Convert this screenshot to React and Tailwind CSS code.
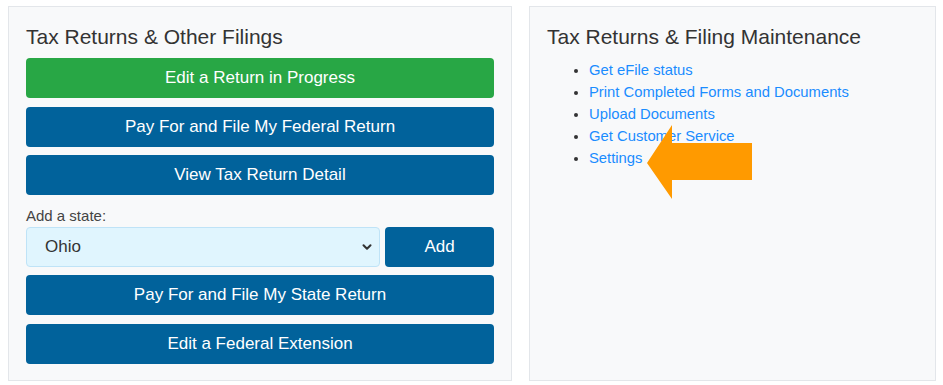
import { ChevronDown } from "lucide-react";

const font = { fontFamily: '"Liberation Sans", Arial, sans-serif' };

const links = [
  "Get eFile status",
  "Print Completed Forms and Documents",
  "Upload Documents",
  "Get Customer Service",
  "Settings",
];

function BlueButton({ children, className = "" }) {
  return (
    <button
      className={`h-[40px] w-full rounded-[4px] bg-[#01629b] text-[17px] text-white ${className}`}
    >
      {children}
    </button>
  );
}

export default function App() {
  return (
    <div
      className="flex gap-[17px] bg-white pl-[8px] pt-[6px] pb-[4px] text-[#333]"
      style={font}
    >
      {/* left card */}
      <div className="w-[504px] h-[375px] border border-[#e3e6ea] bg-[#f8f9fa] px-[17px] pt-[17px]">
        <h4 className="text-[21px] leading-[25px] text-[#333] mb-[9px]">
          Tax Returns &amp; Other Filings
        </h4>
        <div className="flex flex-col gap-[8.5px]">
          <button className="h-[40px] w-full rounded-[4px] bg-[#28a745] text-[17px] text-white">
            Edit a Return in Progress
          </button>
          <BlueButton>Pay For and File My Federal Return</BlueButton>
          <BlueButton>View Tax Return Detail</BlueButton>
        </div>
        <div className="mt-[9px] text-[15px] leading-[23px] text-[#444]">Add a state:</div>
        <div className="flex gap-[5px]">
          <div className="relative flex-1">
            <select
              defaultValue="Ohio"
              className="h-[40px] w-full appearance-none rounded-[4px] border border-[#bfe3f7] bg-[#e0f5fe] pl-[18px] text-[17px] text-[#333] outline-none"
              style={font}
            >
              <option>Ohio</option>
              <option>Indiana</option>
              <option>Michigan</option>
            </select>
            <ChevronDown
              size={14}
              strokeWidth={3.5}
              className="pointer-events-none absolute right-[6px] top-[13px] text-[#333]"
            />
          </div>
          <BlueButton className="!w-[109px]">Add</BlueButton>
        </div>
        <div className="mt-[8px] flex flex-col gap-[8.5px]">
          <BlueButton>Pay For and File My State Return</BlueButton>
          <BlueButton>Edit a Federal Extension</BlueButton>
        </div>
      </div>

      {/* right card */}
      <div className="relative w-[407px] h-[375px] border border-[#e3e6ea] bg-[#f8f9fa] px-[17px] pt-[17px]">
        <h4 className="text-[21px] leading-[25px] text-[#333] mb-[10px]">
          Tax Returns &amp; Filing Maintenance
        </h4>
        <ul className="list-disc pl-[42px] text-[14.8px] leading-[22px] marker:text-[#333]">
          {links.map((l) => (
            <li key={l}>
              <a href="#" className="text-[#1a8cff]">
                {l}
              </a>
            </li>
          ))}
        </ul>
        <svg
          width="106"
          height="76"
          viewBox="0 0 106 76"
          className="absolute left-[117px] top-[117px]"
        >
          <polygon
            points="0,39 25,1 25,19 105,19 105,56 25,56 25,75"
            fill="#ff9a00"
          />
        </svg>
      </div>
    </div>
  );
}
